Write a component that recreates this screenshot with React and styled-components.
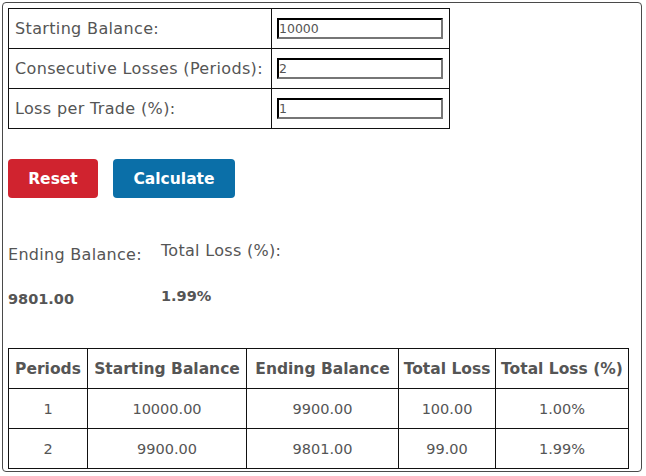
import React from 'react'
import { styled, createGlobalStyle } from 'styled-components'

const FONT = '"DejaVu Sans", "Open Sans", sans-serif'

const GlobalStyle = createGlobalStyle`
  body {
    margin: 0;
    background: #fff;
    font-family: ${FONT};
    color: #555;
  }
`

const inputs = [
  { label: 'Starting Balance:', value: '10000' },
  { label: 'Consecutive Losses (Periods):', value: '2' },
  { label: 'Loss per Trade (%):', value: '1' },
]

const rows = [
  ['1', '10000.00', '9900.00', '100.00', '1.00%'],
  ['2', '9900.00', '9801.00', '99.00', '1.99%'],
]

const headers = ['Periods', 'Starting Balance', 'Ending Balance', 'Total Loss', 'Total Loss (%)']
const colWidths = [79, 159, 152, 97, 133]

function App() {
  return (
    <>
      <GlobalStyle />
      <Card>
        <InputTable>
          <tbody>
            {inputs.map((r) => (
              <tr key={r.label}>
                <LabelCell>{r.label}</LabelCell>
                <FieldCell>
                  <Field defaultValue={r.value} />
                </FieldCell>
              </tr>
            ))}
          </tbody>
        </InputTable>

        <Buttons>
          <Button $bg="#d0232f" $w={90}>Reset</Button>
          <Button $bg="#0b6fa8" $w={122}>Calculate</Button>
        </Buttons>

        <Summary>
          <SummaryCol $w={153}>
            <SummaryLabel $top={14}>Ending Balance:</SummaryLabel>
            <SummaryValue $top={24}>9801.00</SummaryValue>
          </SummaryCol>
          <SummaryCol>
            <SummaryLabel $top={10}>Total Loss (%):</SummaryLabel>
            <SummaryValue $top={25}>1.99%</SummaryValue>
          </SummaryCol>
        </Summary>

        <ResultTable>
          <colgroup>
            {colWidths.map((w, i) => <col key={i} style={{ width: w }} />)}
          </colgroup>
          <thead>
            <tr>
              {headers.map((h) => <Th key={h}>{h}</Th>)}
            </tr>
          </thead>
          <tbody>
            {rows.map((r) => (
              <tr key={r[0]}>
                {r.map((c, i) => <Td key={i}>{c}</Td>)}
              </tr>
            ))}
          </tbody>
        </ResultTable>
      </Card>
    </>
  )
}

const Card = styled.div`
  margin: 2px;
  width: 640px;
  height: 470px;
  box-sizing: border-box;
  border: 1px solid #4a4a4a;
  border-radius: 4px;
  padding: 5px;
  overflow: hidden;
`

const InputTable = styled.table`
  border-collapse: collapse;
  width: 442px;
  tr { height: 40px; }
`

const LabelCell = styled.td`
  width: 263px;
  border: 1px solid #111;
  padding: 0 0 0 6px;
  font-size: 16px;
  letter-spacing: 0.35px;
  color: #555;
  box-sizing: border-box;
  white-space: nowrap;
`

const FieldCell = styled.td`
  border: 1px solid #111;
  padding: 0 6px 0 5px;
`

const Field = styled.input`
  display: block;
  width: 166px;
  height: 21px;
  box-sizing: border-box;
  border: 2px inset #767676;
  border-top-color: #222;
  border-left-color: #222;
  padding: 0;
  font-family: ${FONT};
  font-size: 12.5px;
  color: #555;
  background: #fff;
`

const Buttons = styled.div`
  display: flex;
  gap: 15px;
  margin-top: 30px;
`

const Button = styled.button`
  width: ${(p) => p.$w}px;
  height: 39px;
  border: none;
  border-radius: 4px;
  background: ${(p) => p.$bg};
  color: #fff;
  font-family: ${FONT};
  font-weight: 700;
  font-size: 15.5px;
  padding: 0;
`

const Summary = styled.div`
  display: flex;
  margin-top: 33px;
  height: 117px;
`

const SummaryCol = styled.div`
  display: flex;
  flex-direction: column;
  width: ${(p) => (p.$w ? `${p.$w}px` : 'auto')};
`

const SummaryLabel = styled.div`
  margin-top: ${(p) => p.$top}px;
  font-size: 16px;
  letter-spacing: 0.3px;
  line-height: 20px;
`

const SummaryValue = styled.div`
  margin-top: ${(p) => p.$top}px;
  font-size: 14.5px;
  font-weight: 700;
  line-height: 20px;
`

const ResultTable = styled.table`
  border-collapse: collapse;
  table-layout: fixed;
  width: 620px;
  tr { height: 40px; }
`

const Th = styled.th`
  border: 1px solid #111;
  padding: 0;
  font-size: 15.5px;
  font-weight: 700;
  color: #555;
  text-align: center;
  white-space: nowrap;
`

const Td = styled.td`
  border: 1px solid #111;
  padding: 0;
  font-size: 14.5px;
  color: #555;
  text-align: center;
`

export default App
